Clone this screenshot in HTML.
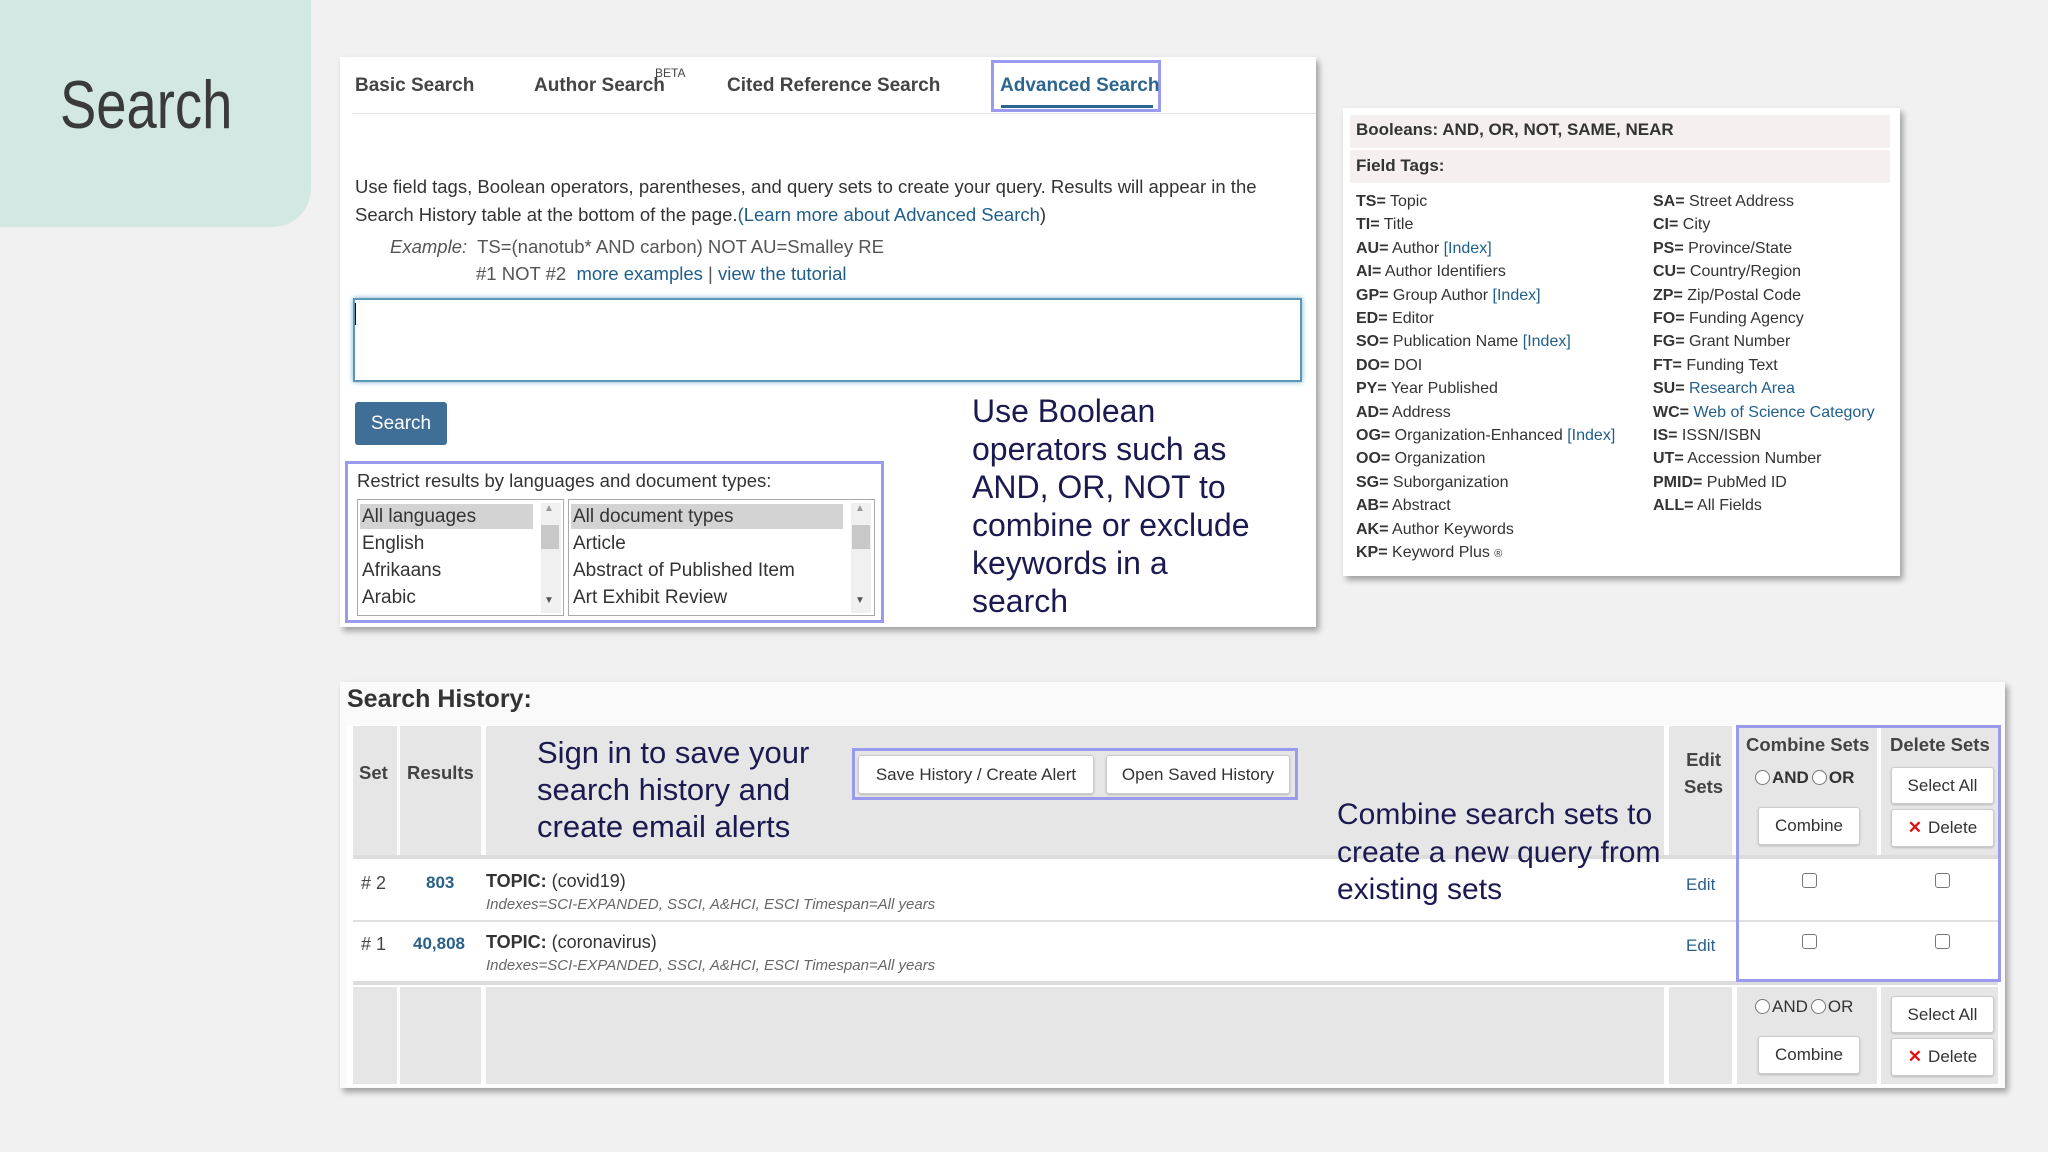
<!DOCTYPE html>
<html><head><meta charset="utf-8"><style>
*{margin:0;padding:0;box-sizing:border-box}
body{width:2048px;height:1152px;background:#f1f1f1;font-family:"Liberation Sans",sans-serif;color:#333;position:relative;overflow:hidden}
.a{position:absolute;white-space:nowrap}
.tile{left:0;top:0;width:311px;height:227px;background:#d3e8e2;border-radius:0 0 38px 0}
.panel{background:#fff;box-shadow:3px 4px 6px rgba(0,0,0,.35)}
.tab{font-size:19px;font-weight:bold;color:#444;top:75px}
.lnk{color:#1f5e8a}
.btn{background:#fff;border:1px solid #ccc;border-radius:3px;box-shadow:0 1px 2px rgba(0,0,0,.2);font-size:17px;color:#333;text-align:center}
.ann{color:#1a1a50;font-size:32px;line-height:38px}
.ft{font-size:16px;line-height:23.4px;color:#333}
.ft b{font-weight:bold}
.gcol{background:#e6e6e6}
.rad{display:inline-block;width:15px;height:15px;border:1px solid #777;border-radius:50%;background:#fff;vertical-align:-2px;margin-right:2px}
.cb{width:15px;height:15px;border:1px solid #777;border-radius:3px;background:#fff}
.x{color:#e01010;font-weight:bold;margin-right:6px}
</style></head><body>
<div class="a tile"></div>
<div class="a" style="left:60px;top:66px;font-size:68px;color:#3a3a3a;transform:scaleX(0.8);transform-origin:0 0">Search</div>

<!-- top panel -->
<div class="a panel" style="left:340px;top:57px;width:976px;height:570px"></div>
<div class="a tab" style="left:355px">Basic Search</div>
<div class="a tab" style="left:534px">Author Search</div>
<div class="a" style="left:655px;top:66px;font-size:12px;color:#444">BETA</div>
<div class="a tab" style="left:727px">Cited Reference Search</div>
<div class="a" style="left:991px;top:60px;width:170px;height:52px;border:3px solid #9a9af0"></div>
<div class="a tab" style="left:1000px;color:#2c6590">Advanced Search</div>
<div class="a" style="left:1001px;top:105px;width:152px;height:3px;background:#2c6590"></div>
<div class="a" style="left:352px;top:113px;width:964px;height:1px;background:#e4e4e4"></div>
<div class="a" style="left:355px;top:173px;font-size:18.5px;line-height:28px;color:#333;white-space:normal;width:960px">Use field tags, Boolean operators, parentheses, and query sets to create your query. Results will appear in the Search History table at the bottom of the page.<span class="lnk">(Learn more about Advanced Search</span>)</div>
<div class="a" style="left:390px;top:236px;font-size:18.5px;color:#555"><i>Example:</i>&nbsp; TS=(nanotub* AND carbon) NOT AU=Smalley RE</div>
<div class="a" style="left:476px;top:263px;font-size:18.5px;color:#555">#1 NOT #2 &nbsp;<span class="lnk">more examples</span> | <span class="lnk">view the tutorial</span></div>
<div class="a" style="left:353px;top:298px;width:949px;height:84px;border:2px solid #5a98b8;box-shadow:0 0 5px #7ab0cc;background:#fff"></div>
<div class="a" style="left:355px;top:303px;width:1px;height:22px;background:#000"></div>
<div class="a" style="left:355px;top:402px;width:92px;height:43px;background:#3f6f96;border-radius:3px;color:#fff;font-size:19px;text-align:center;line-height:43px">Search</div>
<div class="a" style="left:345px;top:461px;width:539px;height:162px;border:3px solid #9a9af0"></div>
<div class="a" style="left:357px;top:470px;font-size:18.5px;color:#333">Restrict results by languages and document types:</div>
<div class="a" style="left:357px;top:499px;width:207px;height:117px;border:1px solid #aaa;background:#fff"></div>
<div class="a" style="left:360px;top:504px;width:173px;height:25px;background:#d3d3d3"></div>
<div class="a" style="left:362px;top:503px;font-size:19px;line-height:27px;color:#333">All languages<br>English<br>Afrikaans<br>Arabic</div>
<div class="a" style="left:541px;top:503px;width:20px;height:110px;background:#f0f0f0"></div>
<div class="a" style="left:541px;top:525px;width:18px;height:24px;background:#c8c8c8"></div>
<div class="a" style="left:544px;top:503px;font-size:10px;color:#999">▲</div>
<div class="a" style="left:544px;top:595px;font-size:10px;color:#555">▼</div>
<div class="a" style="left:568px;top:499px;width:307px;height:117px;border:1px solid #aaa;background:#fff"></div>
<div class="a" style="left:571px;top:504px;width:272px;height:25px;background:#d3d3d3"></div>
<div class="a" style="left:573px;top:503px;font-size:19px;line-height:27px;color:#333">All document types<br>Article<br>Abstract of Published Item<br>Art Exhibit Review</div>
<div class="a" style="left:851px;top:503px;width:20px;height:110px;background:#f0f0f0"></div>
<div class="a" style="left:852px;top:525px;width:18px;height:24px;background:#c8c8c8"></div>
<div class="a" style="left:855px;top:503px;font-size:10px;color:#999">▲</div>
<div class="a" style="left:855px;top:595px;font-size:10px;color:#555">▼</div>
<div class="a ann" style="left:972px;top:392px">Use Boolean<br>operators such as<br>AND, OR, NOT to<br>combine or exclude<br>keywords in a<br>search</div>

<!-- right panel -->
<div class="a panel" style="left:1343px;top:108px;width:557px;height:468px"></div>
<div class="a" style="left:1350px;top:115px;width:540px;height:33px;background:#f6efef"></div>
<div class="a" style="left:1350px;top:150px;width:540px;height:33px;background:#f6efef"></div>
<div class="a" style="left:1356px;top:120px;font-size:17px;font-weight:bold;color:#333">Booleans: AND, OR, NOT, SAME, NEAR</div>
<div class="a" style="left:1356px;top:156px;font-size:17px;font-weight:bold;color:#333">Field Tags:</div>
<div class="a ft" style="left:1356px;top:190px"><b>TS=</b> Topic<br><b>TI=</b> Title<br><b>AU=</b> Author <span class="lnk">[Index]</span><br><b>AI=</b> Author Identifiers<br><b>GP=</b> Group Author <span class="lnk">[Index]</span><br><b>ED=</b> Editor<br><b>SO=</b> Publication Name <span class="lnk">[Index]</span><br><b>DO=</b> DOI<br><b>PY=</b> Year Published<br><b>AD=</b> Address<br><b>OG=</b> Organization-Enhanced <span class="lnk">[Index]</span><br><b>OO=</b> Organization<br><b>SG=</b> Suborganization<br><b>AB=</b> Abstract<br><b>AK=</b> Author Keywords<br><b>KP=</b> Keyword Plus <span style="font-size:11px">®</span></div>
<div class="a ft" style="left:1653px;top:190px"><b>SA=</b> Street Address<br><b>CI=</b> City<br><b>PS=</b> Province/State<br><b>CU=</b> Country/Region<br><b>ZP=</b> Zip/Postal Code<br><b>FO=</b> Funding Agency<br><b>FG=</b> Grant Number<br><b>FT=</b> Funding Text<br><b>SU=</b> <span class="lnk">Research Area</span><br><b>WC=</b> <span class="lnk">Web of Science Category</span><br><b>IS=</b> ISSN/ISBN<br><b>UT=</b> Accession Number<br><b>PMID=</b> PubMed ID<br><b>ALL=</b> All Fields</div>

<!-- search history -->
<div class="a panel" style="left:340px;top:682px;width:1665px;height:406px;background:#fafafa"></div>
<div class="a" style="left:347px;top:685px;font-size:25px;font-weight:bold;color:#333">Search History:</div>
<div class="a" style="left:347px;top:725px;width:1653px;height:362px;background:#fff"></div>
<div class="a gcol" style="left:353px;top:726px;width:44px;height:129px"></div>
<div class="a gcol" style="left:400px;top:726px;width:81px;height:129px"></div>
<div class="a gcol" style="left:486px;top:726px;width:1178px;height:129px"></div>
<div class="a gcol" style="left:1669px;top:726px;width:63px;height:129px"></div>
<div class="a gcol" style="left:1737px;top:726px;width:140px;height:129px"></div>
<div class="a gcol" style="left:1881px;top:726px;width:117px;height:129px"></div>
<div class="a" style="left:353px;top:855px;width:1645px;height:4px;background:#dcdcdc"></div>
<div class="a" style="left:353px;top:920px;width:1645px;height:2px;background:#e0e0e0"></div>
<div class="a" style="left:353px;top:981px;width:1645px;height:4px;background:#dcdcdc"></div>
<div class="a gcol" style="left:353px;top:987px;width:44px;height:97px"></div>
<div class="a gcol" style="left:400px;top:987px;width:81px;height:97px"></div>
<div class="a gcol" style="left:486px;top:987px;width:1178px;height:97px"></div>
<div class="a gcol" style="left:1669px;top:987px;width:63px;height:97px"></div>
<div class="a gcol" style="left:1737px;top:987px;width:140px;height:97px"></div>
<div class="a gcol" style="left:1881px;top:987px;width:117px;height:97px"></div>

<div class="a" style="left:359px;top:762px;font-size:18.5px;font-weight:bold;color:#444">Set</div>
<div class="a" style="left:407px;top:762px;font-size:18.5px;font-weight:bold;color:#444">Results</div>
<div class="a ann" style="left:537px;top:734px;font-size:31px;line-height:37px">Sign in to save your<br>search history and<br>create email alerts</div>
<div class="a" style="left:852px;top:748px;width:446px;height:52px;border:3px solid #9a9af0"></div>
<div class="a btn" style="left:858px;top:755px;width:236px;height:39px;line-height:37px">Save History / Create Alert</div>
<div class="a btn" style="left:1106px;top:755px;width:184px;height:39px;line-height:37px">Open Saved History</div>
<div class="a" style="left:1684px;top:746px;font-size:18.5px;font-weight:bold;color:#444;line-height:27px;text-align:center">Edit<br>Sets</div>
<div class="a" style="left:1746px;top:734px;font-size:18.5px;font-weight:bold;color:#444">Combine Sets</div>
<div class="a" style="left:1890px;top:734px;font-size:18.5px;font-weight:bold;color:#444">Delete Sets</div>
<div class="a" style="left:1755px;top:768px;font-size:17px;font-weight:bold;color:#333"><span class="rad"></span>AND<span class="rad" style="margin-left:3px"></span>OR</div>
<div class="a btn" style="left:1891px;top:767px;width:103px;height:37px;line-height:35px">Select All</div>
<div class="a btn" style="left:1758px;top:807px;width:102px;height:38px;line-height:36px">Combine</div>
<div class="a btn" style="left:1891px;top:809px;width:103px;height:38px;line-height:36px"><span class="x">✕</span>Delete</div>
<div class="a ann" style="left:1337px;top:796px;font-size:30px;line-height:37.5px">Combine search sets to<br>create a new query from<br>existing sets</div>

<div class="a" style="left:361px;top:873px;font-size:18px;color:#444"># 2</div>
<div class="a" style="left:426px;top:873px;font-size:17px;font-weight:bold;color:#2a6088">803</div>
<div class="a" style="left:486px;top:871px;font-size:18px;color:#333"><b>TOPIC:</b> (covid19)</div>
<div class="a" style="left:486px;top:896px;font-size:15px;color:#666;font-style:italic">Indexes=SCI-EXPANDED, SSCI, A&amp;HCI, ESCI Timespan=All years</div>
<div class="a" style="left:1686px;top:875px;font-size:17px;color:#2a6088">Edit</div>
<div class="a cb" style="left:1802px;top:873px"></div>
<div class="a cb" style="left:1935px;top:873px"></div>

<div class="a" style="left:361px;top:934px;font-size:18px;color:#444"># 1</div>
<div class="a" style="left:413px;top:934px;font-size:17px;font-weight:bold;color:#2a6088">40,808</div>
<div class="a" style="left:486px;top:932px;font-size:18px;color:#333"><b>TOPIC:</b> (coronavirus)</div>
<div class="a" style="left:486px;top:957px;font-size:15px;color:#666;font-style:italic">Indexes=SCI-EXPANDED, SSCI, A&amp;HCI, ESCI Timespan=All years</div>
<div class="a" style="left:1686px;top:936px;font-size:17px;color:#2a6088">Edit</div>
<div class="a cb" style="left:1802px;top:934px"></div>
<div class="a cb" style="left:1935px;top:934px"></div>

<div class="a" style="left:1736px;top:725px;width:265px;height:257px;border:3px solid #9a9af0"></div>

<div class="a" style="left:1755px;top:997px;font-size:17px;color:#333"><span class="rad"></span>AND<span class="rad" style="margin-left:3px"></span>OR</div>
<div class="a btn" style="left:1891px;top:996px;width:103px;height:37px;line-height:35px">Select All</div>
<div class="a btn" style="left:1758px;top:1036px;width:102px;height:38px;line-height:36px">Combine</div>
<div class="a btn" style="left:1891px;top:1038px;width:103px;height:38px;line-height:36px"><span class="x">✕</span>Delete</div>
</body></html>
